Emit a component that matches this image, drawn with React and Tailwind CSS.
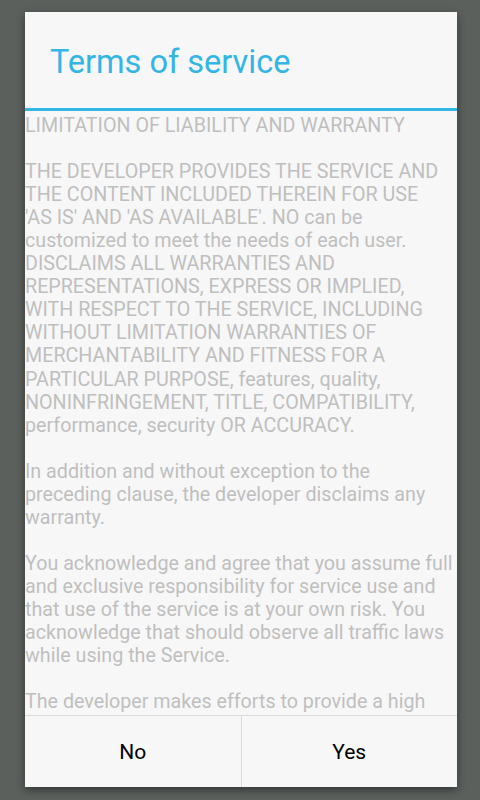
import React from "react";

const paragraphs = [
  ["LIMITATION OF LIABILITY AND WARRANTY"],
  [
    "THE DEVELOPER PROVIDES THE SERVICE AND",
    "THE CONTENT INCLUDED THEREIN FOR USE",
    "'AS IS' AND 'AS AVAILABLE'. NO can be",
    "customized to meet the needs of each user.",
    "DISCLAIMS ALL WARRANTIES AND",
    "REPRESENTATIONS, EXPRESS OR IMPLIED,",
    "WITH RESPECT TO THE SERVICE, INCLUDING",
    "WITHOUT LIMITATION WARRANTIES OF",
    "MERCHANTABILITY AND FITNESS FOR A",
    "PARTICULAR PURPOSE, features, quality,",
    "NONINFRINGEMENT, TITLE, COMPATIBILITY,",
    "performance, security OR ACCURACY.",
  ],
  [
    "In addition and without exception to the",
    "preceding clause, the developer disclaims any",
    "warranty.",
  ],
  [
    "You acknowledge and agree that you assume full",
    "and exclusive responsibility for service use and",
    "that use of the service is at your own risk. You",
    "acknowledge that should observe all traffic laws",
    "while using the Service.",
  ],
  [
    "The developer makes efforts to provide a high",
    "quality service, however, the accuracy of the",
  ],
];

export default function App() {
  return (
    <div
      className="w-[480px] h-[800px] bg-[#5b605d] pl-[25px] pt-[12px] overflow-hidden"
      style={{ fontFamily: "Roboto, 'Noto Sans', sans-serif" }}
    >
      <div className="w-[432px] h-[775px] bg-[#f7f7f7] flex flex-col shadow-[0_3px_8px_rgba(0,0,0,0.45)]">
        <div className="h-[96px] flex items-center pl-[25px] shrink-0">
          <span className="text-[32.5px] leading-none text-[#33b5e5] pt-[4px]">Terms of service</span>
        </div>
        <div className="h-[3px] bg-[#33b5e5] shrink-0" />
        <div className="flex-1 overflow-hidden pt-[3px] text-[19.7px] leading-[23.05px] text-[#bfbfbf] min-h-0">
          {paragraphs.map((p, i) => (
            <div key={i} className={i > 0 ? "mt-[23.05px]" : ""}>
              {p.map((line, j) => (
                <div key={j} className="whitespace-nowrap">
                  {line}
                </div>
              ))}
            </div>
          ))}
        </div>
        <div className="h-[72px] shrink-0 border-t border-[#dadada] flex">
          <div className="flex-1 flex items-center justify-center text-[21px] text-black border-r border-[#dadada] pt-[3px]">
            No
          </div>
          <div className="flex-1 flex items-center justify-center text-[21px] text-black pt-[3px]">
            Yes
          </div>
        </div>
      </div>
    </div>
  );
}
